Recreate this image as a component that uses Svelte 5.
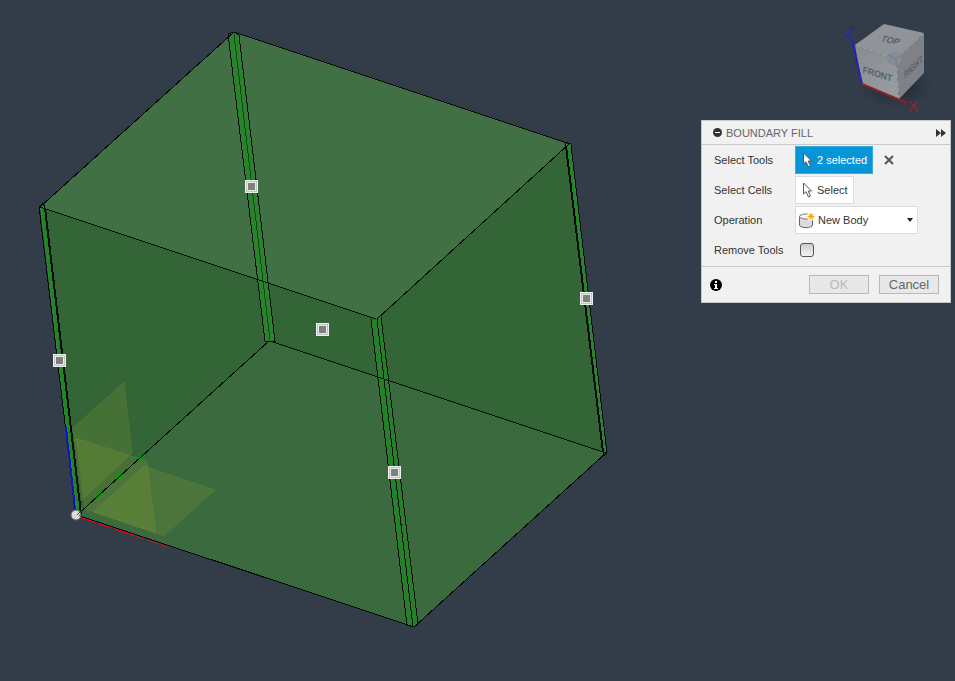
<script>
    let operation = "New Body";
    let removeTools = false;
    let cellsPicked = false;

    const edges = [
        "M234 32L570 144",
        "M234 32L40 207",
        "M40 207L376 319",
        "M377 319L569 144",
        "M269 341L77 515",
        "M270 341L606 453",
        "M77 515L414 627",
        "M606 453L414 627",
    ];

    const strips = [
        { points: "228,34 233,32 239,35 275,341 265,341", fill: "#2a822d" },
        { points: "371,319 377,320 381,317 418,624 414,627 407,625", fill: "#26802a" },
    ];

    const stripLines = [
        "M228 34L265 341L275 341L239 35",
        "M228 34L234 32L239 35",
        "M371 319L407 625L414 627L418 624L381 317",
        "M377 319L413 627",
    ];

    const handles = [
        { x: 251, y: 186 },
        { x: 322, y: 329 },
        { x: 59, y: 360 },
        { x: 394, y: 472 },
        { x: 586, y: 298 },
    ];
</script>

<main class="workspace">
    <svg class="scene" viewBox="0 0 955 681" preserveAspectRatio="xMinYMin meet" aria-label="Model view">
        <g shape-rendering="crispEdges">
            <polygon points="234,32 570,144 606,453 414,627 77,515 40,207" fill="#346537" />
            <polygon points="234,32 570,144 376,319 40,207" fill="#407044" />
            <polygon points="270,341 606,453 414,627 77,515" fill="#3a6a3d" />
        </g>

        <!-- origin planes -->
        <g fill="#93a532" fill-opacity="0.2" stroke="#8aa040" stroke-opacity="0.15">
            <polygon points="124,382 132,453 82,500 73,428" />
            <polygon points="76,438 147,461 156,533 85,509" />
            <polygon points="144,466 215,490 164,536 93,512" />
        </g>

        <g shape-rendering="crispEdges" fill="none">
            {#each strips as strip}
                <polygon points={strip.points} fill={strip.fill} />
            {/each}
            <polygon points="40,206 45,207 81,514 76,515" fill="#317f37" />
            <polygon points="565,145 571,145 607,453 602,453" fill="#317f37" />
            <path d="M43 208L79 514M567 145L603 452" stroke="#158a18" stroke-width="2" />
            <path d="M80 512L141 457" stroke="#08a008" stroke-width="2" />
            {#each edges as d}
                <path {d} stroke="#050a06" />
            {/each}
            {#each stripLines as d}
                <path {d} stroke="#050a06" />
            {/each}
            <path d="M234 34L270 340" stroke="#0d4a12" />
            <path d="M39 207L76 515M571 145L607 453" stroke="#050a06" />
            <path d="M45 208L81 514M566 146L603 452" stroke="#050a06" stroke-width="2" />
            <path d="M39 207L43 203L45 208M565 147L565 142L571 144M603 451L604 456L607 453" stroke="#050a06" />
            <path d="M66 427L75 509" stroke="#1010d8" stroke-width="2" stroke-dasharray="14 2" />
            <path d="M82 518L168 547" stroke="#e00808" stroke-dasharray="15 2" />
        </g>

        <circle cx="76" cy="515" r="5" fill="#d9dadb" stroke="#59636b" />
        <path d="M77 515L83 509M79 516L82 514" stroke="#10601a" />

        {#each handles as handle}
            <g shape-rendering="crispEdges">
                <rect x={handle.x - 6} y={handle.y - 6} width="13" height="13" fill="#f0f0f0" />
                <rect x={handle.x - 5} y={handle.y - 5} width="11" height="11" fill="#c4c4c4" />
                <rect x={handle.x - 4} y={handle.y - 4} width="9" height="9" fill="#e8ece8" />
                <rect x={handle.x - 3} y={handle.y - 3} width="7" height="7" fill="#808080" />
            </g>
        {/each}
    </svg>

    <aside class="dock">
        <svg class="viewcube" viewBox="835 14 100 106" width="100" height="106" aria-label="View cube">
            <defs>
                <radialGradient id="shadow">
                    <stop offset="0.4" stop-color="#222a34" stop-opacity="0.7" />
                    <stop offset="1" stop-color="#222a34" stop-opacity="0" />
                </radialGradient>
                <linearGradient id="front" x2="0.5" y2="1">
                    <stop offset="0" stop-color="#888b92" />
                    <stop offset="1" stop-color="#979a9f" />
                </linearGradient>
            </defs>
            <ellipse cx="896" cy="86" rx="37" ry="22" fill="url(#shadow)" />
            <polygon points="855,45 896,60 899,99 862,84" fill="url(#front)" />
            <polygon points="896,60 924,33 924,73 899,99" fill="#7e8288" />
            <polygon points="855,45 884,24 924,33 896,60" fill="#90949a" />
            <path
                d="M856 45L896 60L923 34M896 60L899 98"
                fill="none"
                stroke="#aaa99f"
                stroke-dasharray="4 3"
                stroke-opacity="0.8"
            />
            <polygon points="887,55 894,51 901,54 901,61 896,66 888,63" fill="#858d99" />
            <path d="M888 55L896 59L901 55M896 59L896 65" fill="none" stroke="#747b84" />
            <g class="face" text-anchor="middle">
                <text transform="translate(889 43) rotate(12) skewX(-18)" font-size="9">TOP</text>
                <text transform="translate(877 77) rotate(17) skewX(8)" font-size="9">FRONT</text>
                <text transform="translate(914 70) rotate(-43) skewX(-30)" font-size="8">RIGHT</text>
            </g>
            <path d="M852 40L862 84" stroke="#2424b4" stroke-width="2" />
            <path d="M862 84L907 103" stroke="#8e2028" stroke-width="2" />
            <text class="axis" x="845" y="37" fill="#2424b4">Z</text>
            <text class="axis" x="908" y="111" fill="#9c2028">X</text>
        </svg>

        <form class="panel" on:submit|preventDefault>
            <header>
                <svg width="9" height="9" viewBox="0 0 9 9" aria-hidden="true">
                    <circle cx="4.5" cy="4.5" r="4.5" fill="#333" />
                    <path d="M2 4.5H7" stroke="#fff" />
                </svg>
                <h1>BOUNDARY FILL</h1>
                <button type="button" class="bare" aria-label="Expand panel">
                    <svg width="10" height="8" viewBox="0 0 10 8" aria-hidden="true">
                        <path d="M0 0L5 4L0 8ZM5 0L10 4L5 8Z" fill="#333" />
                    </svg>
                </button>
            </header>

            <div class="rows">
                <div class="row">
                    <label for="tools">Select Tools</label>
                    <button type="button" id="tools" class="pick active">
                        <svg width="11" height="16" viewBox="0 0 11 16" aria-hidden="true">
                            <path d="M1.5 1V12L4 9.7L6.5 15L8.5 14L6.2 9H9.5Z" fill="#fff" stroke="#555" />
                        </svg>
                        2 selected
                    </button>
                    <button type="button" class="bare clear" aria-label="Clear selection">
                        <svg width="10" height="10" viewBox="0 0 10 10" aria-hidden="true">
                            <path d="M1 1L9 9M9 1L1 9" stroke="#555" stroke-width="2" />
                        </svg>
                    </button>
                </div>
                <div class="row">
                    <label for="cells">Select Cells</label>
                    <button type="button" id="cells" class="pick" on:click={() => (cellsPicked = true)}>
                        <svg width="11" height="16" viewBox="0 0 11 16" aria-hidden="true">
                            <path d="M1.5 1V12L4 9.7L6.5 15L8.5 14L6.2 9H9.5Z" fill="#fff" stroke="#555" />
                        </svg>
                        Select
                    </button>
                </div>
                <div class="row">
                    <label for="operation">Operation</label>
                    <div class="dropdown">
                        <svg class="body-icon" width="16" height="17" viewBox="0 0 16 17" aria-hidden="true">
                            <path d="M.5 4.5V13C.5 16.5 13.5 16.5 13.5 13V4.5Z" fill="#dcdcdc" stroke="#666" />
                            <ellipse cx="7" cy="4.5" rx="6.5" ry="2.5" fill="#f5f5f5" stroke="#777" />
                            <circle cx="12" cy="4.5" r="4" fill="#fff" />
                            <path d="M12 1V8M8.500 4.5H15.5M9.5 2L14.5 7M14.5 2L9.5 7" stroke="#f9a800" />
                            <circle cx="12" cy="4.5" r="2" fill="#f9a800" />
                        </svg>
                        <select id="operation" bind:value={operation}>
                            <option>New Body</option>
                            <option>Join</option>
                            <option>Cut</option>
                            <option>Intersect</option>
                        </select>
                        <svg class="arrow" width="6" height="4" viewBox="0 0 6 4" aria-hidden="true">
                            <path d="M0 0H6L3 4Z" fill="#222" />
                        </svg>
                    </div>
                </div>
                <div class="row">
                    <label for="remove">Remove Tools</label>
                    <input type="checkbox" id="remove" bind:checked={removeTools} />
                </div>
            </div>

            <footer>
                <button type="button" class="bare info" aria-label="Info">
                    <svg width="12" height="12" viewBox="0 0 12 12" aria-hidden="true">
                        <circle cx="6" cy="6" r="6" fill="#000" />
                        <path d="M5 2H7V4H5ZM4 5H7V9H8V10H4V9H5V6H4Z" fill="#fff" />
                    </svg>
                </button>
                <button class="action" disabled={!cellsPicked}>OK</button>
                <button type="button" class="action">Cancel</button>
            </footer>
        </form>
    </aside>
</main>

<style>
    :global(body) {
        margin: 0;
        background: #333d49;
    }

    .workspace {
        position: relative;
        display: flex;
        justify-content: flex-end;
        min-height: 100vh;
        box-sizing: border-box;
        overflow: hidden;
        font-family: "Liberation Sans", Arial, sans-serif;
        font-size: 11px;
        color: #333;
    }

    .scene {
        position: absolute;
        top: 0;
        left: 0;
        width: 100%;
        height: 100%;
    }

    .dock {
        position: relative;
        display: flex;
        flex-direction: column;
        align-items: flex-end;
        padding: 14px 4px 0 0;
    }

    .viewcube {
        display: block;
        margin-right: 16px;
    }

    .face {
        font-weight: bold;
        fill: #5c6066;
    }

    .axis {
        font-size: 15px;
    }

    .panel {
        box-sizing: border-box;
        width: 250px;
        background: #f1f1f1;
        border: 1px solid #c8c8c8;
    }

    header {
        display: flex;
        align-items: center;
        gap: 4px;
        height: 23px;
        padding: 0 4px 0 11px;
        border-bottom: 1px solid #c8c8c8;
    }

    h1 {
        flex: 1;
        margin: 0;
        font-size: 11px;
        font-weight: normal;
        color: #666;
    }

    button,
    select {
        font: inherit;
        color: inherit;
    }

    .bare {
        display: flex;
        padding: 0;
        border: 0;
        background: none;
    }

    .rows {
        padding-bottom: 1px;
    }

    .row {
        display: flex;
        align-items: center;
        height: 30px;
        padding-left: 12px;
    }

    .row label {
        width: 81px;
    }

    .pick {
        display: flex;
        align-items: center;
        gap: 4px;
        height: 28px;
        padding: 0 5px 0 6px;
        border: 1px solid #ddd;
        background: #fff;
    }

    .pick.active {
        color: #fff;
        background: #0696d7;
        border-color: #38a9dc;
    }

    .clear {
        margin-left: 11px;
    }

    .dropdown {
        position: relative;
        width: 123px;
        height: 28px;
    }

    .dropdown svg {
        position: absolute;
        pointer-events: none;
    }

    .body-icon {
        top: 6px;
        left: 4px;
    }

    .arrow {
        top: 12px;
        right: 5px;
    }

    select {
        appearance: none;
        box-sizing: border-box;
        width: 100%;
        height: 100%;
        padding: 0 16px 0 22px;
        border: 1px solid #ddd;
        border-radius: 0;
        background: #fff;
    }

    input {
        appearance: none;
        box-sizing: border-box;
        width: 14px;
        height: 14px;
        margin: 0 0 0 5px;
        border: 1px solid #555;
        border-radius: 3px;
        background: linear-gradient(#ccc, #f4f4f4);
    }

    input:checked {
        background: #0696d7;
    }

    footer {
        display: flex;
        align-items: center;
        gap: 10px;
        height: 35px;
        padding: 0 11px 0 8px;
        border-top: 1px solid #c8c8c8;
    }

    .info {
        margin-right: auto;
    }

    .action {
        width: 60px;
        height: 19px;
        padding: 0;
        border: 1px solid #b8b8b8;
        background: #e8e8e8;
        font-size: 13px;
        line-height: 17px;
        color: #666;
    }

    .action:disabled {
        color: #b8b8b8;
    }
</style>
